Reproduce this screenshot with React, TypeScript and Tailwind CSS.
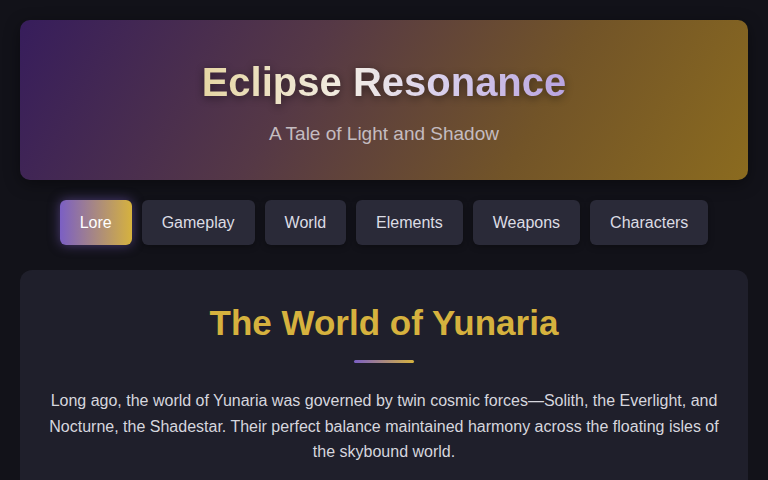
import React from "react";

const tabs = ["Lore", "Gameplay", "World", "Elements", "Weapons", "Characters"];

export default function App() {
  return (
    <div
      className="min-h-[480px] w-full bg-[#121219] px-5 pt-5 overflow-hidden"
      style={{ fontFamily: '"Liberation Sans", Arial, sans-serif' }}
    >
      <header className="h-[160px] rounded-[10px] bg-[linear-gradient(120deg,#371d5c_0%,#553846_38%,#725428_70%,#8b6b1f_100%)] flex flex-col items-center shadow-[0_4px_16px_rgba(0,0,0,0.4)]">
        <h1
          className="mt-[39px] text-[40px] leading-[46px] font-bold bg-[linear-gradient(90deg,#e6d6a4_0%,#f2ede4_40%,#d9d0ec_65%,#b9a4e0_100%)] bg-clip-text text-transparent [filter:drop-shadow(0_2px_4px_rgba(0,0,0,0.45))]"
        >
          Eclipse Resonance
        </h1>
        <p className="mt-[18px] text-[19px] leading-[22px] text-[#c4bcc0]">A Tale of Light and Shadow</p>
      </header>

      <nav className="mt-5 flex justify-center gap-[10px]">
        {tabs.map((t, i) => (
          <button
            key={t}
            className={
              i === 0
                ? "h-[45px] px-5 rounded-[6px] text-[16px] text-white bg-[linear-gradient(90deg,#7b5fc4,#d6b23e)] shadow-[0_0_12px_rgba(123,95,196,0.55)]"
                : "h-[45px] px-5 rounded-[6px] text-[16px] text-[#dcdce4] bg-[#2a2a38] shadow-[0_2px_6px_rgba(0,0,0,0.3)]"
            }
          >
            {t}
          </button>
        ))}
      </nav>

      <main className="mt-[25px] rounded-[12px] bg-[#1f1f2b] px-[26px] pt-[32px] pb-8 flex flex-col items-center">
        <h2 className="text-[35px] leading-[42px] font-bold text-[#d6b23e]">The World of Yunaria</h2>
        <div className="mt-[16px] h-[3px] w-[60px] rounded-full bg-[linear-gradient(90deg,#7b5fc4,#d6b23e)]" />
        <p className="mt-[25px] text-center text-[16px] leading-[25.6px] text-[#d6d6de]">
          Long ago, the world of Yunaria was governed by twin cosmic forces—Solith, the Everlight, and Nocturne, the
          Shadestar. Their perfect balance maintained harmony across the floating isles of the skybound world.
        </p>
      </main>
    </div>
  );
}
